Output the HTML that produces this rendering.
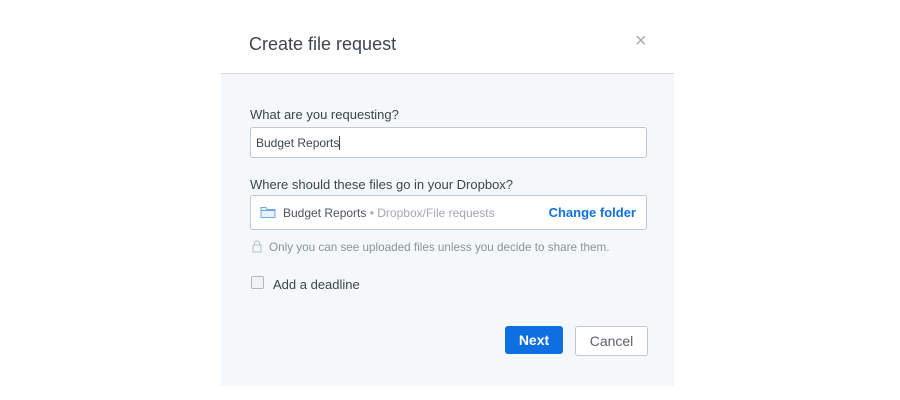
<!DOCTYPE html>
<html><head><style>
body{margin:0;width:900px;height:400px;background:#fff;font-family:"Liberation Sans",sans-serif;position:relative;overflow:hidden}
.dlg{position:absolute;left:221px;top:0;width:453px;height:386px;background:#f5f8fb}
.hd{position:absolute;left:0;top:0;width:453px;height:73px;background:#fff;border-bottom:1px solid #d6dadf}
.t{position:absolute;left:28px;top:34px;font-size:18px;color:#3d464d}
.x{position:absolute;left:414px;top:30px;font-size:20px;color:#a4acb3}
.lbl{position:absolute;left:29px;font-size:13px;color:#3d464d}
.inp{position:absolute;left:29px;width:395px;background:#fff;border:1px solid #c1c7cd;border-radius:3px}
.a{position:absolute;font-size:12px}
.btn{position:absolute;top:326px;height:28px;border-radius:3px;font-size:14px;text-align:center;line-height:28px}
</style></head><body>
<div class="dlg">
<div class="hd"><div class="t">Create file request</div><div class="x">×</div></div>
<div class="lbl" style="top:107px">What are you requesting?</div>
<div class="inp" style="top:127px;height:29px"><span class="a" style="left:5px;top:8px;color:#3d464d">Budget Reports<span style="display:inline-block;width:1px;height:14px;background:#3d464d;vertical-align:-3px"></span></span></div>
<div class="lbl" style="top:177px">Where should these files go in your Dropbox?</div>
<div class="inp" style="top:195px;height:33px">
<svg style="position:absolute;left:9px;top:10px" width="16" height="13" viewBox="0 0 16 13"><path d="M1 2.5V11.5H15V3.5H7L6 1.5H1Z" fill="#e8f2fc" stroke="#6aa8e6"/><path d="M1 4.5H15" stroke="#6aa8e6"/></svg>
<span class="a" style="left:32px;top:10px;color:#4a545c">Budget Reports <span style="color:#a0a8ae">• Dropbox/File requests</span></span>
<span class="a" style="right:10px;top:9px;color:#0d72dd;font-weight:bold;font-size:13px">Change folder</span></div>
<svg style="position:absolute;left:31px;top:240px" width="10" height="13" viewBox="0 0 10 13"><rect x="1" y="5" width="8" height="7" fill="none" stroke="#b8bfc5"/><path d="M2.5 5V3.5A2.5 2.5 0 0 1 7.5 3.5V5" fill="none" stroke="#b8bfc5"/></svg>
<div class="a" style="left:48px;top:241px;color:#8a939a;font-size:11.7px">Only you can see uploaded files unless you decide to share them.</div>
<div style="position:absolute;left:30px;top:276px;width:11px;height:11px;border:1px solid #b0b7bd;border-radius:2px;background:#f0f2f4"></div>
<div class="lbl" style="left:52px;top:277px">Add a deadline</div>
<div class="btn" style="left:284px;width:58px;background:#0d6fe0;color:#fff;font-weight:bold">Next</div>
<div class="btn" style="left:354px;width:71px;background:#fff;border:1px solid #c1c7cd;color:#5a636a;height:28px">Cancel</div>
</div>
</body></html>
